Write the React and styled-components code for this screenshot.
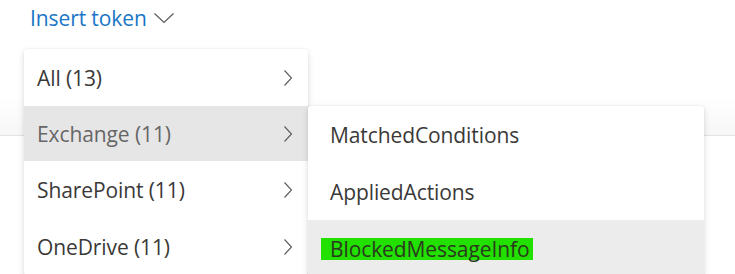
import React from 'react';
import styled, { createGlobalStyle } from 'styled-components';

const GlobalStyle = createGlobalStyle`
  html, body {
    margin: 0;
    padding: 0;
    background: #fff;
    overflow: hidden;
  }
  body {
    font-family: "Open Sans", "Noto Sans", sans-serif;
  }
`;

const Page = styled.div`
  position: relative;
  width: 735px;
  height: 274px;
  overflow: hidden;
`;

const Backdrop = styled.div`
  position: absolute;
  left: 0;
  right: 0;
  top: 96px;
  height: 39px;
  border-bottom: 1px solid #e3e3e3;
  background: linear-gradient(#fff, #f7f7f7);
  z-index: 0;
`;

const Trigger = styled.button`
  display: flex;
  align-items: center;
  gap: 6px;
  margin: 4px 0 0 30px;
  padding: 0;
  border: 0;
  background: none;
  color: #1a76c6;
  font-family: inherit;
  font-size: 21px;
  line-height: 28px;
  letter-spacing: -0.1px;
  cursor: pointer;
`;

const Menus = styled.div`
  position: relative;
  z-index: 1;
  display: flex;
  align-items: flex-start;
  margin: 17px 0 0 24px;
`;

const Menu = styled.ul`
  list-style: none;
  margin: 0;
  padding: 0;
  width: ${p => p.$width}px;
  margin-top: ${p => p.$offset || 0}px;
  background: #fff;
  border-radius: 3px;
  box-shadow: 0 3.2px 7.2px rgba(0, 0, 0, 0.13), 0 0.6px 1.8px rgba(0, 0, 0, 0.11);
`;

const Item = styled.li`
  display: flex;
  align-items: center;
  justify-content: space-between;
  height: ${p => p.$height || 57}px;
  padding: 0 15px 0 ${p => p.$indent}px;
  background: ${p => p.$bg || 'transparent'};
  color: ${p => (p.$muted ? '#666' : '#3a3938')};
  font-size: 21px;
  letter-spacing: -0.1px;
`;

const Mark = styled.span`
  background: #22e000;
  color: #2b3a1f;
  padding: 0 4px 0 9px;
  margin-left: -9px;
  line-height: 22px;
`;

const ChevronRight = () => (
  <svg width="10" height="18" viewBox="0 0 10 18" fill="none" stroke="#5a5a5a" strokeWidth="1.1">
    <path d="M1.5 1.5 L8.5 9 L1.5 16.5" />
  </svg>
);

const ChevronDown = () => (
  <svg width="22" height="12" viewBox="0 0 22 12" fill="none" stroke="#5a5a5a" strokeWidth="1.2">
    <path d="M1.5 1.5 L11 10.5 L20.5 1.5" />
  </svg>
);

const categories = [
  { label: 'All (13)' },
  { label: 'Exchange (11)', active: true },
  { label: 'SharePoint (11)' },
  { label: 'OneDrive (11)' },
];

const tokens = ['MatchedConditions', 'AppliedActions', 'BlockedMessageInfo'];

export default function App() {
  return (
    <Page>
      <GlobalStyle />
      <Backdrop />
      <Trigger>
        Insert token
        <ChevronDown />
      </Trigger>
      <Menus>
        <Menu $width={284}>
          {categories.map(c => (
            <Item
              key={c.label}
              $indent={13}
              $bg={c.active ? '#e6e6e6' : undefined}
              $muted={c.active}
              $height={c.active ? 55 : 57}
            >
              {c.label}
              <ChevronRight />
            </Item>
          ))}
        </Menu>
        <Menu $width={396} $offset={57}>
          {tokens.map((t, i) => (
            <Item key={t} $indent={22} $bg={i === 2 ? '#ececec' : undefined}>
              {i === 2 ? <Mark>{t}</Mark> : t}
            </Item>
          ))}
        </Menu>
      </Menus>
    </Page>
  );
}
